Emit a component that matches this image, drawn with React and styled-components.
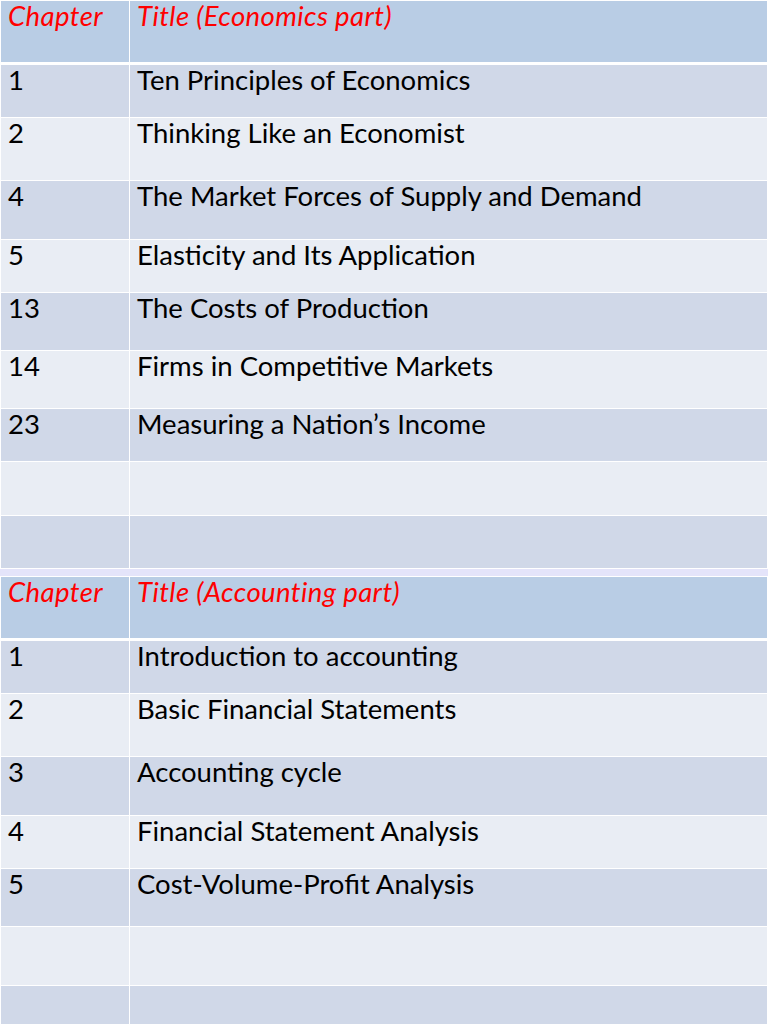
import styled, { createGlobalStyle } from "styled-components";

const economics = [
  ["1", "Ten Principles of Economics", 53],
  ["2", "Thinking Like an Economist", 63],
  ["4", "The Market Forces of Supply and Demand", 59],
  ["5", "Elasticity and Its Application", 53],
  ["13", "The Costs of Production", 58],
  ["14", "Firms in Competitive Markets", 58],
  ["23", "Measuring a Nation\u2019s Income", 53],
  ["", "", 54],
  ["", "", 53],
];

const accounting = [
  ["1", "Introduction to accounting", 53],
  ["2", "Basic Financial Statements", 63],
  ["3", "Accounting cycle", 59],
  ["4", "Financial Statement Analysis", 53],
  ["5", "Cost-Volume-Profit Analysis", 58],
  ["", "", 59],
  ["", "", 60],
];

function ChapterTable({ title, rows }) {
  return (
    <Table>
      <Row $h={64} $head>
        <Cell $tone="head">Chapter</Cell>
        <Cell $tone="head">{title}</Cell>
      </Row>
      {rows.map(([num, name, h], i) => (
        <Row key={i} $h={h}>
          <Cell $tone={i % 2 === 0 ? "dark" : "light"}>{num}</Cell>
          <Cell $tone={i % 2 === 0 ? "dark" : "light"}>{name}</Cell>
        </Row>
      ))}
    </Table>
  );
}

export default function App() {
  return (
    <Page>
      <GlobalStyle />
      <ChapterTable title="Title (Economics part)" rows={economics} />
      <Strip />
      <ChapterTable title="Title (Accounting part)" rows={accounting} />
    </Page>
  );
}

const GlobalStyle = createGlobalStyle`
  body {
    margin: 0;
    background: #ffffff;
    font-family: Lato, "Open Sans", sans-serif;
  }
`;

const Page = styled.div`
  width: 768px;
`;

const Table = styled.div`
  display: flex;
  flex-direction: column;
  background: #ffffff;
  border: 1px solid #ffffff;
  border-bottom: none;
`;

const Row = styled.div`
  box-sizing: border-box;
  height: ${(p) => p.$h}px;
  display: grid;
  grid-template-columns: 128px 1fr;
  column-gap: 1px;
  border-bottom: ${(p) => (p.$head ? 3 : 1)}px solid #ffffff;
`;

const tones = {
  head: "#b9cde5",
  dark: "#d0d8e8",
  light: "#e9edf4",
};

const Cell = styled.div`
  background: ${(p) => tones[p.$tone]};
  padding: 0 0 0 7px;
  font-size: 27.5px;
  line-height: 30px;
  white-space: nowrap;
  color: ${(p) => (p.$tone === "head" ? "#ff0000" : "#000000")};
  font-style: ${(p) => (p.$tone === "head" ? "italic" : "normal")};
  letter-spacing: ${(p) => (p.$tone === "head" ? "0.4px" : "normal")};
`;

const Strip = styled.div`
  height: 7px;
  background: #e4e4fa;
`;
